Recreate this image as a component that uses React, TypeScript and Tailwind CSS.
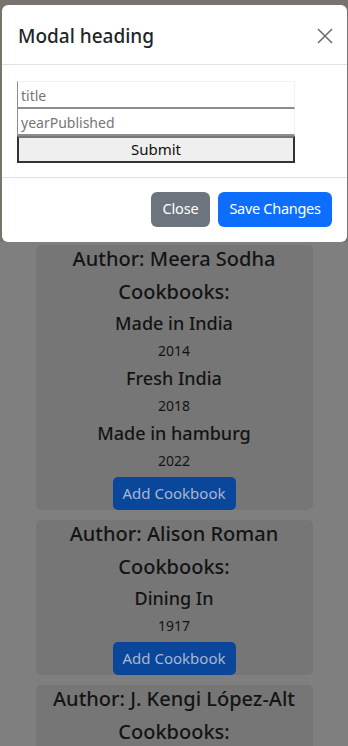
const authors = [
  {
    name: "Meera Sodha",
    books: [
      { title: "Made in India", year: 2014 },
      { title: "Fresh India", year: 2018 },
      { title: "Made in hamburg", year: 2022 },
    ],
  },
  {
    name: "Alison Roman",
    books: [{ title: "Dining In", year: 1917 }],
  },
  {
    name: "J. Kengi López-Alt",
    books: [{ title: "The Food Lab", year: 2015 }],
  },
];

const font = { fontFamily: '"Noto Sans", "Open Sans", sans-serif' };

function ModalDialog() {
  return (
    <div className="bg-[#78736c] pt-[5px] pl-[2px] pr-[1px]">
      <div className="bg-white rounded-[6px] overflow-hidden">
        <div className="flex items-center justify-between h-[60px] pl-4 pr-[14px] border-b border-[#dee2e6]">
          <h5 className="text-[19px] font-medium leading-[30px] text-[#212529] mt-[3px]">Modal heading</h5>
          <button className="w-4 h-4 mt-[2px]" aria-label="Close">
            <svg viewBox="0 0 16 16" width="16" height="16">
              <path d="M1 1L15 15M15 1L1 15" stroke="#6f6f6f" strokeWidth="1.6" fill="none" />
            </svg>
          </button>
        </div>
        <div className="pt-[16px] pb-[14px] pl-[15px] h-[113px] border-b border-[#dee2e6]">
          <form className="w-[278px] flex flex-col" onSubmit={(e) => e.preventDefault()}>
            <input
              placeholder="title"
              className="h-[28px] px-[3px] pt-[2px] text-[14px] bg-white border-l border-t border-r border-b-2 border-l-[#8d8d8d] border-t-[#f2f2f2] border-r-[#f2f2f2] border-b-[#8d8d8d] placeholder:text-[#767676] outline-none"
            />
            <input
              placeholder="yearPublished"
              className="h-[27px] px-[3px] pt-[1px] text-[14px] bg-white border-l border-t-0 border-r border-b-2 border-l-[#8d8d8d] border-r-[#f2f2f2] border-b-[#8d8d8d] placeholder:text-[#767676] outline-none"
            />
            <button className="h-[27px] text-[15px] text-[#111] bg-[#efefef] border-2 border-[#333] border-t-[#777]">
              Submit
            </button>
          </form>
        </div>
        <div className="flex justify-end items-center gap-2 h-[64px] pr-[15px] pb-[2px]">
          <button className="w-[59px] h-[35px] rounded-[6px] bg-[#6c757d] text-white text-[14.5px] tracking-[-0.2px]">Close</button>
          <button className="w-[114px] h-[35px] rounded-[6px] bg-[#0d6efd] text-white text-[14.5px] tracking-[-0.3px]">Save Changes</button>
        </div>
      </div>
    </div>
  );
}

function AuthorCard({ name, books }: { name: string; books: { title: string; year: number }[] }) {
  return (
    <div className="w-[277px] mx-auto bg-[#767676] rounded-[5px] text-center text-[#141414] mb-[10px]">
      <h4 className="text-[20px] font-medium leading-[26px] pt-[1px] mb-[7px]">Author: {name}</h4>
      <h4 className="text-[20px] font-medium leading-[26px] mb-[7px]">Cookbooks:</h4>
      {books.map((b) => (
        <div key={b.title}>
          <h5 className="text-[18px] font-medium leading-[22px] mb-[7px]">{b.title}</h5>
          <p className="text-[14px] leading-[20px] mb-[6px]">{b.year}</p>
        </div>
      ))}
      <button className="w-[123px] h-[33px] rounded-[5px] bg-[#0a479b] text-[#a7b7cf] text-[15px]">
        Add Cookbook
      </button>
    </div>
  );
}

export default function App() {
  return (
    <div className="min-h-screen bg-[#7f7f7f] overflow-hidden" style={font}>
      <ModalDialog />
      <div className="pt-[3px]">
        {authors.map((a) => (
          <AuthorCard key={a.name} name={a.name} books={a.books} />
        ))}
      </div>
    </div>
  );
}
